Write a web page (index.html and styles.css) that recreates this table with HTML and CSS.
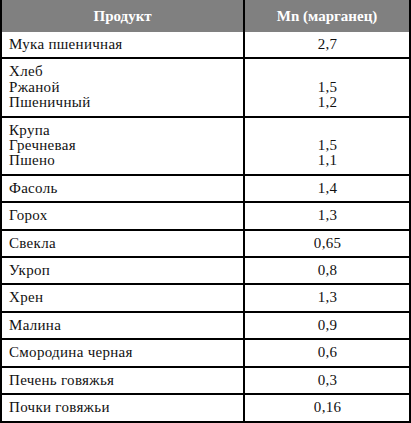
FILE: index.html
```html
<!DOCTYPE html>
<html lang="ru">
<head>
<meta charset="utf-8">
<link rel="stylesheet" href="styles.css">
</head>
<body>
<table class="mn-table">
  <thead>
    <tr><th class="h-prod">Продукт</th><th class="h-val">Mn (марганец)</th></tr>
  </thead>
  <tbody>
    <tr><td>Мука пшеничная</td><td class="v">2,7</td></tr>
    <tr><td>Хлеб<br>Ржаной<br>Пшеничный</td><td class="v"><br>1,5<br>1,2</td></tr>
    <tr><td>Крупа<br>Гречневая<br>Пшено</td><td class="v"><br>1,5<br>1,1</td></tr>
    <tr><td>Фасоль</td><td class="v">1,4</td></tr>
    <tr><td>Горох</td><td class="v">1,3</td></tr>
    <tr><td>Свекла</td><td class="v">0,65</td></tr>
    <tr><td>Укроп</td><td class="v">0,8</td></tr>
    <tr><td>Хрен</td><td class="v">1,3</td></tr>
    <tr><td>Малина</td><td class="v">0,9</td></tr>
    <tr><td>Смородина черная</td><td class="v">0,6</td></tr>
    <tr><td>Печень говяжья</td><td class="v">0,3</td></tr>
    <tr><td>Почки говяжьи</td><td class="v">0,16</td></tr>
  </tbody>
</table>
</body>
</html>
```
FILE: styles.css
```css
body {
  margin: 0;
  font-size: 15px;
  font-family: "Times New Roman", "Liberation Serif", serif;
}
.mn-table {
  width: 411px;
  border-collapse: collapse;
  color: #111;
  font-family: "Times New Roman", "Liberation Serif", serif;
}
.h-prod { width: 240px; }
.h-val { width: 163px; }
.mn-table th {
  background: #808080;
  color: #fff;
  font-weight: bold;
  font-size: 15px;
  height: 32px;
  padding: 0;
  border-left: 2px solid #000;
  border-right: 2px solid #000;
  text-align: center;
}
.mn-table td {
  font-size: 15px;
  letter-spacing: 0.3px;
  border: 2px solid #000;
  border-top: none;
  padding: 5px 6px 5px 7px;
  line-height: 15.4px;
  vertical-align: top;
}
.mn-table td.v {
  text-align: center;
}
```
